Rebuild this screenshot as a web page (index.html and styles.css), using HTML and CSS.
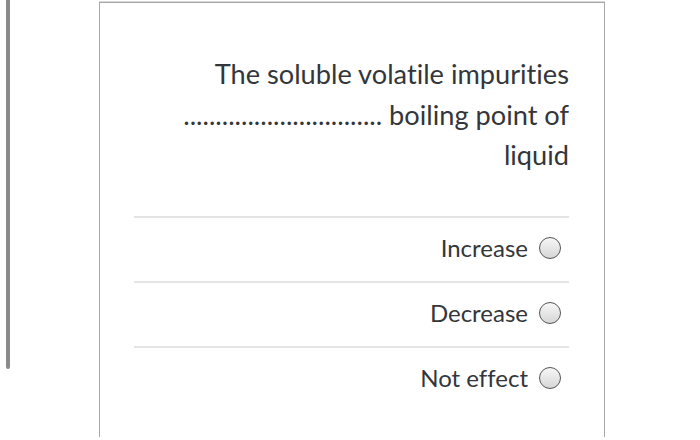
FILE: index.html
```html
<!DOCTYPE html>
<html>
<head>
<meta charset="utf-8">
<link rel="stylesheet" href="styles.css">
</head>
<body>
<div class="page">
  <div class="sidebar-bar"></div>
  <div class="card">
    <p class="question">The soluble volatile impurities ............................... boiling point of liquid</p>
    <div class="options">
      <label class="option"><span class="label">Increase</span><span class="radio"></span></label>
      <label class="option"><span class="label">Decrease</span><span class="radio"></span></label>
      <label class="option"><span class="label">Not effect</span><span class="radio"></span></label>
    </div>
  </div>
</div>
</body>
</html>
```
FILE: styles.css
```css
html, body {
  margin: 0;
  padding: 0;
  background: #ffffff;
}
body {
  font-family: Lato, "Open Sans", sans-serif;
  font-variant-ligatures: none;
  color: #33363a;
  width: 700px;
  height: 440px;
  overflow: hidden;
}
.page {
  display: flex;
  align-items: flex-start;
  height: 440px;
}
.sidebar-bar {
  width: 4px;
  height: 369px;
  margin-left: 6px;
  background: #8a8a8a;
  border-radius: 0 0 2px 2px;
  flex: none;
}
.card {
  margin-left: 89px;
  margin-top: 2px;
  width: 506px;
  height: 435px;
  border: 1px solid #a8a8a8;
  border-bottom: none;
  box-shadow: 0 -1px 0 #d8d8d8;
  padding: 51px 35px 0 34px;
  box-sizing: border-box;
  flex: none;
}
.question {
  margin: 0;
  text-align: right;
  font-size: 27.2px;
  line-height: 40.5px;
}
.options {
  margin-top: 40px;
}
.option {
  display: flex;
  justify-content: flex-end;
  align-items: center;
  height: 65px;
  padding-bottom: 3px;
  box-sizing: border-box;
  border-top: 2px solid #e4e4e4;
  font-size: 24px;
}
.label {
  margin-right: 11px;
}
.radio {
  width: 20px;
  height: 20px;
  border: 1.5px solid #555555;
  border-radius: 50%;
  background: linear-gradient(#f7f7f7, #d6d6d6);
  margin-right: 8px;
  flex: none;
}
```
